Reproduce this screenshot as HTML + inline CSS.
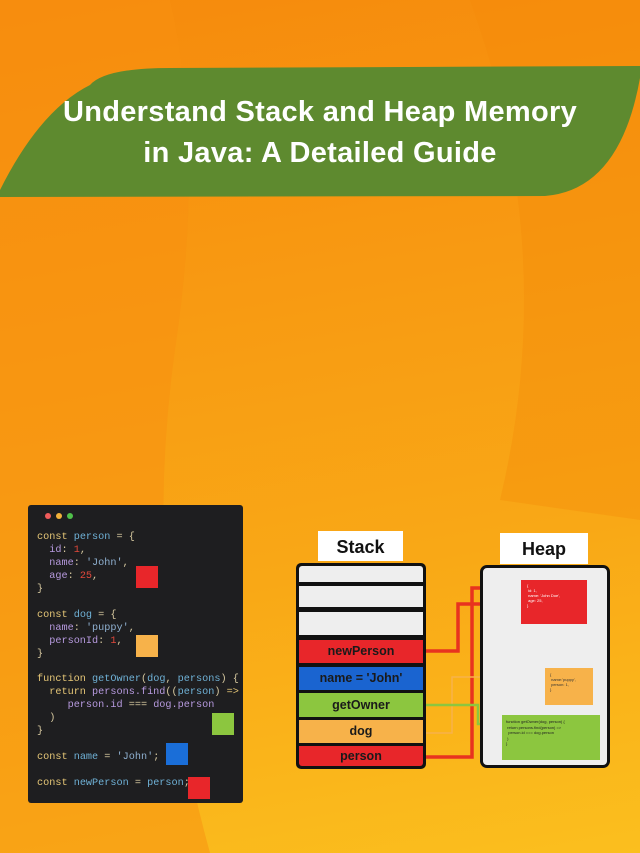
<!DOCTYPE html>
<html><head><meta charset="utf-8"><style>
*{margin:0;padding:0;box-sizing:border-box}
body{width:640px;height:853px;overflow:hidden;position:relative;font-family:"Liberation Sans",sans-serif;
background:linear-gradient(170deg,#f68a0c 0%,#f89a12 35%,#f9a816 65%,#fbbf1e 100%)}
.abs{position:absolute}
.code{left:28px;top:505px;width:215px;height:298px;background:#1e1e20;border-radius:3px;font-family:"Liberation Mono",monospace;font-size:10.2px;line-height:12.95px;color:#d7c9a0;white-space:pre;padding:0 0 0 9px}
.k{color:#e6c777}.v{color:#6fb1d6}.s{color:#8fb0d0}.n{color:#e2483b}.p{color:#b79adf}
.sq{position:absolute;width:22px;height:22px}
.row{position:absolute;left:299px;width:124px;font-weight:bold;font-size:12.5px;text-align:center;color:#1a1a1a}
</style></head><body>
<svg class="abs" style="left:0;top:0" width="640" height="853">
<path d="M0 0 L170 0 Q205 150 175 350 Q140 600 210 853 L0 853Z" fill="#f7900f" opacity=".5"/>
<path d="M470 0 Q560 250 500 500 L640 520 L640 0Z" fill="#f48a0a" opacity=".35"/>
<path d="M90 85 Q105 68 170 68 L640 66 L640 78 Q620 190 545 196 L0 197 L0 190 Q40 110 90 85Z" fill="#5e8a2f"/>
<path d="M425 651 H458 V604 H521" stroke="#e8331f" stroke-width="3.5" fill="none"/>
<path d="M425 757 H472 V588 H521" stroke="#e8331f" stroke-width="3.5" fill="none"/>
<path d="M425 733 H452 V677 H545" stroke="#f7b24a" stroke-width="1.5" fill="none"/>
<path d="M425 705 H478 V724 H502" stroke="#8cc63f" stroke-width="2.5" fill="none"/>
</svg>
<div class="abs" style="left:0;top:92px;width:640px;text-align:center;color:#fff;font-weight:bold;font-size:29px;letter-spacing:0.3px;line-height:41px">Understand Stack and Heap Memory<br>in Java: A Detailed Guide</div>

<div class="abs code"><div style="height:20px;position:relative"><span class="abs" style="left:8px;top:8px;width:6px;height:6px;border-radius:50%;background:#ef5b5b"></span><span class="abs" style="left:19px;top:8px;width:6px;height:6px;border-radius:50%;background:#f2b13a"></span><span class="abs" style="left:30px;top:8px;width:6px;height:6px;border-radius:50%;background:#4fc04a"></span></div><div style="margin-top:7px"><span class="k">const</span> <span class="v">person</span> = {
  <span class="p">id</span>: <span class="n">1</span>,
  <span class="p">name</span>: <span class="s">'John'</span>,
  <span class="p">age</span>: <span class="n">25</span>,
}

<span class="k">const</span> <span class="v">dog</span> = {
  <span class="p">name</span>: <span class="s">'puppy'</span>,
  <span class="p">personId</span>: <span class="n">1</span>,
}

<span class="k">function</span> <span class="v">getOwner</span>(<span class="v">dog</span>, <span class="v">persons</span>) {
  <span class="k">return</span> <span class="p">persons.find</span>((<span class="v">person</span>) <span class="k">=&gt;</span>
     <span class="p">person.id</span> === <span class="p">dog.person</span>
  )
}

<span class="k">const</span> <span class="v">name</span> = <span class="s">'John'</span>;

<span class="k">const</span> <span class="v">newPerson</span> = <span class="v">person</span>;</div></div>
<div class="sq" style="left:136px;top:566px;background:#e8262a"></div>
<div class="sq" style="left:136px;top:635px;background:#f7b24a"></div>
<div class="sq" style="left:212px;top:713px;background:#8cc63f"></div>
<div class="sq" style="left:166px;top:743px;background:#1a6ed8"></div>
<div class="sq" style="left:188px;top:777px;background:#e8262a"></div>

<div class="abs" style="left:318px;top:531px;width:85px;height:30px;background:#fff;text-align:center;font-weight:bold;font-size:18px;line-height:32px;color:#111">Stack</div>
<div class="abs" style="left:500px;top:533px;width:88px;height:31px;background:#fff;text-align:center;font-weight:bold;font-size:18px;line-height:33px;color:#111">Heap</div>
<div class="abs" style="left:296px;top:563px;width:130px;height:206px;background:#111;border-radius:5px"></div>
<div class="row" style="top:566px;height:16px;background:#eee;border-radius:3px 3px 0 0"></div>
<div class="row" style="top:586px;height:21px;background:#eee"></div>
<div class="row" style="top:612px;height:23px;background:#eee"></div>
<div class="row" style="top:640px;height:23px;line-height:23px;background:#e8262a">newPerson</div>
<div class="row" style="top:667px;height:23px;line-height:23px;background:#1a64d0">name = 'John'</div>
<div class="row" style="top:693px;height:24px;line-height:24px;background:#8cc63f">getOwner</div>
<div class="row" style="top:720px;height:23px;line-height:23px;background:#f7b24a">dog</div>
<div class="row" style="top:746px;height:20px;line-height:20px;background:#e8262a;border-radius:0 0 3px 3px">person</div>

<div class="abs" style="left:480px;top:565px;width:130px;height:203px;background:#eeeeee;border:3px solid #111;border-radius:7px"></div>
<div class="abs" style="left:521px;top:580px;width:66px;height:44px;background:#e8262a;font-size:4px;line-height:5px;padding:3px 6px;color:#fff">{<br>&nbsp;id: 1,<br>&nbsp;name: 'John Doe',<br>&nbsp;age: 25,<br>}</div>
<div class="abs" style="left:545px;top:668px;width:48px;height:37px;background:#f7b24a;font-size:4px;line-height:5px;padding:4px 5px;color:#333">{<br>&nbsp;name:'puppy',<br>&nbsp;person: 1,<br>}</div>
<div class="abs" style="left:502px;top:715px;width:98px;height:45px;background:#8cc63f;font-size:4px;line-height:5.5px;padding:4px 4px;color:#222">function getOwner(dog, person) {<br>&nbsp;return persons.find(person) =&gt;<br>&nbsp;&nbsp;person.id === dog.person<br>&nbsp;)<br>}</div>
</body></html>
